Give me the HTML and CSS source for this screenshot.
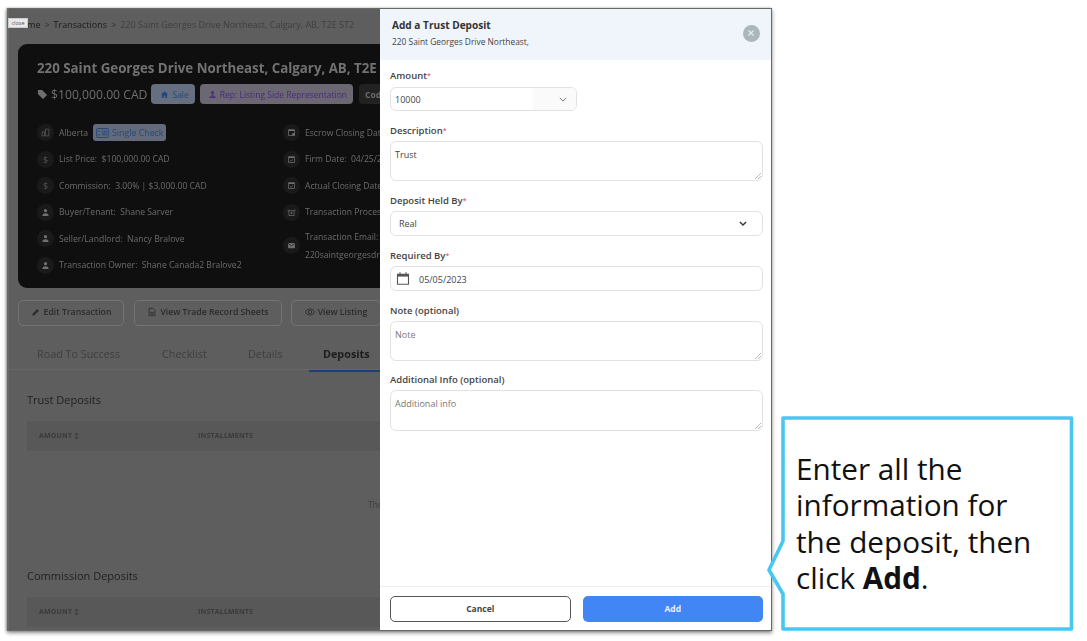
FILE: index.html
```html
<!DOCTYPE html>
<html lang="en">
<head>
<meta charset="utf-8">
<title>Add a Trust Deposit</title>
<link rel="stylesheet" href="styles.css">
</head>
<body>
<div class="window">
  <main class="page">
    <nav class="crumbs"><span class="crumb-strong">Home</span><span class="sep">&gt;</span><span class="crumb-strong">Transactions</span><span class="sep">&gt;</span><span>220 Saint Georges Drive Northeast, Calgary, AB, T2E 5T2</span></nav>
    <section class="card">
      <h1 class="card-title">220 Saint Georges Drive Northeast, Calgary, AB, T2E 5T2</h1>
      <div class="tags">
        <svg class="price-icon" viewBox="0 0 12 12"><path d="M1 1h4.5L11 6.5 6.5 11 1 5.5z" fill="#6f6f6f"/></svg>
        <span class="price">$100,000.00 CAD</span>
        <span class="pill pill-blue"><svg viewBox="0 0 12 12" class="pill-icon"><path d="M6 1.5 1 6h1.5v4.5h2.5v-3h2v3h2.5V6H11z" fill="#24477f"/></svg>Sale</span>
        <span class="pill pill-purple"><svg viewBox="0 0 12 12" class="pill-icon"><circle cx="6" cy="3.2" r="2" fill="#4b2a78"/><path d="M4.8 5.5h2.4v3H10v2H2v-2h2.8z" fill="#4b2a78"/></svg>Rep: Listing Side Representation</span>
        <span class="pill pill-dark">Code</span>
      </div>
      <div class="facts">
        <div class="fact-col">
          <div class="fact"><span class="fact-icon"><svg viewBox="0 0 12 12"><path d="M1.5 10.5V5h3v5.5zM6 10.5v-9h4.5v9z" fill="none" stroke="#5c5c5c"/></svg></span><span>Alberta</span><span class="check"><svg viewBox="0 0 14 11" class="check-icon"><rect x=".6" y=".6" width="12.8" height="9.8" rx="1" fill="none" stroke="#24477f" stroke-width="1.1"/><path d="M6 3.5h6M6 5.5h6M6 7.5h6M2 3.5h2.5M2 7.5h2.5" stroke="#24477f"/></svg>Single Check</span></div>
          <div class="fact"><span class="fact-icon glyph">$</span><span>List Price:&nbsp; $100,000.00 CAD</span></div>
          <div class="fact"><span class="fact-icon glyph">$</span><span>Commission:&nbsp; 3.00% | $3,000.00 CAD</span></div>
          <div class="fact"><span class="fact-icon"><svg viewBox="0 0 12 12"><circle cx="6" cy="3.6" r="2.2" fill="#6f6f6f"/><path d="M1.8 10.5c0-2.6 2-3.6 4.2-3.6s4.2 1 4.2 3.6z" fill="#6f6f6f"/></svg></span><span>Buyer/Tenant:&nbsp; Shane Sarver</span></div>
          <div class="fact"><span class="fact-icon"><svg viewBox="0 0 12 12"><circle cx="6" cy="3.6" r="2.2" fill="#6f6f6f"/><path d="M1.8 10.5c0-2.6 2-3.6 4.2-3.6s4.2 1 4.2 3.6z" fill="#6f6f6f"/></svg></span><span>Seller/Landlord:&nbsp; Nancy Bralove</span></div>
          <div class="fact"><span class="fact-icon"><svg viewBox="0 0 12 12"><circle cx="6" cy="3.6" r="2.2" fill="#6f6f6f"/><path d="M1.8 10.5c0-2.6 2-3.6 4.2-3.6s4.2 1 4.2 3.6z" fill="#6f6f6f"/></svg></span><span>Transaction Owner:&nbsp; Shane Canada2 Bralove2</span></div>
        </div>
        <div class="fact-col">
          <div class="fact"><span class="fact-icon"><svg viewBox="0 0 12 12"><path d="M2 2.5h8v7.5H2z" fill="none" stroke="#6f6f6f"/><path d="M2 2h8v2H2z" fill="#6f6f6f"/><circle cx="8.6" cy="8.6" r="1.8" fill="#6f6f6f"/></svg></span><span>Escrow Closing Date:&nbsp; 05/05/2023</span></div>
          <div class="fact"><span class="fact-icon"><svg viewBox="0 0 12 12"><path d="M2 2.5h8v7.5H2z" fill="none" stroke="#6f6f6f"/><path d="M2 2h8v2H2z" fill="#6f6f6f"/><path d="m4.2 7 1.3 1.2L8 5.8" fill="none" stroke="#6f6f6f"/></svg></span><span>Firm Date:&nbsp; 04/25/2023</span></div>
          <div class="fact"><span class="fact-icon"><svg viewBox="0 0 12 12"><path d="M2 2.5h8v7.5H2z" fill="none" stroke="#6f6f6f"/><path d="M2 2h8v2H2z" fill="#6f6f6f"/><path d="m4.2 7 1.3 1.2L8 5.8" fill="none" stroke="#6f6f6f"/></svg></span><span>Actual Closing Date:&nbsp; 05/05/2023</span></div>
          <div class="fact"><span class="fact-icon"><svg viewBox="0 0 12 12"><path d="M2.5 3.5h7v6.5h-7zM1.5 2v2.5M10.5 2v2.5M6 5v3M4.5 6.5h3" fill="none" stroke="#6f6f6f"/></svg></span><span>Transaction Processing:&nbsp; Real</span></div>
          <div class="fact fact-tall"><span class="fact-icon"><svg viewBox="0 0 12 12"><rect x="1.5" y="2.5" width="9" height="7" rx="1" fill="#6f6f6f"/><path d="m2 3.5 4 3 4-3" fill="none" stroke="#161616"/></svg></span><span class="fact-stack"><span>Transaction Email:</span><span>220saintgeorgesdrive@real.com</span></span></div>
        </div>
      </div>
    </section>
    <div class="actions">
      <span class="action action-edit"><svg viewBox="0 0 12 12" class="action-icon"><path d="M1.5 10.5 2 8l5.5-5.5 2 2L4 10z" fill="#2b2b2b"/></svg>Edit Transaction</span>
      <span class="action action-sheets"><svg viewBox="0 0 12 12" class="action-icon"><path d="M2.5 1.5h4.5l2.5 2.5v6.5h-7zM4 6.5h4M4 8.5h4" fill="none" stroke="#2b2b2b"/></svg>View Trade Record Sheets</span>
      <span class="action action-listing"><svg viewBox="0 0 12 12" class="action-icon"><ellipse cx="6" cy="6" rx="5" ry="3.4" fill="none" stroke="#2b2b2b"/><circle cx="6" cy="6" r="2" fill="none" stroke="#2b2b2b"/></svg>View Listing</span>
    </div>
    <div class="tabs">
      <span class="tab tab-road">Road To Success</span>
      <span class="tab tab-check">Checklist</span>
      <span class="tab tab-details">Details</span>
      <span class="tab tab-active">Deposits</span>
    </div>
    <h2 class="section-title title-trust">Trust Deposits</h2>
    <div class="table-head"><span class="col-amount">AMOUNT <svg viewBox="0 0 6 10" class="sort"><path d="M3 .5 5.5 4h-5zM3 9.5.5 6h5z" fill="#3d3d3d"/></svg></span><span>INSTALLMENTS</span></div>
    <p class="empty">There are no deposits</p>
    <h2 class="section-title">Commission Deposits</h2>
    <div class="table-head"><span class="col-amount">AMOUNT <svg viewBox="0 0 6 10" class="sort"><path d="M3 .5 5.5 4h-5zM3 9.5.5 6h5z" fill="#3d3d3d"/></svg></span><span>INSTALLMENTS</span></div>
  </main>

  <aside class="drawer">
    <header class="drawer-head">
      <div>
        <h2 class="drawer-title">Add a Trust Deposit</h2>
        <p class="drawer-sub">220 Saint Georges Drive Northeast,</p>
      </div>
      <span class="close"><svg viewBox="0 0 10 10"><path d="m2.5 2.5 5 5M7.5 2.5l-5 5" stroke="#e6eaee" stroke-width="1.2" fill="none"/></svg></span>
    </header>
    <form class="form">
      <div class="field field-first">
        <div class="label">Amount<span class="req">*</span></div>
        <div class="control amount"><span class="amount-value">10000</span><span class="addon"><svg viewBox="0 0 10 6" class="chev-thin"><path d="m1 1 4 4 4-4" fill="none" stroke="#666" stroke-width="1.1"/></svg></span></div>
      </div>
      <div class="field">
        <div class="label">Description<span class="req">*</span></div>
        <div class="control area">Trust</div>
      </div>
      <div class="field">
        <div class="label">Deposit Held By<span class="req">*</span></div>
        <div class="control select"><span>Real</span><svg viewBox="0 0 10 6" class="chev-bold"><path d="m1.2 1 3.8 3.8L8.8 1" fill="none" stroke="#333" stroke-width="1.7"/></svg></div>
      </div>
      <div class="field">
        <div class="label">Required By<span class="req">*</span></div>
        <div class="control date"><svg viewBox="0 0 14 14" class="cal"><path d="M1.5 2.7h11v10h-11z" fill="none" stroke="#555" stroke-width="1.1"/><path d="M1.5 2.5h11v2.6h-11z" fill="#555"/><path d="M4 .8v2.5M10 .8v2.5" stroke="#555" stroke-width="1.1"/></svg><span class="date-value">05/05/2023</span></div>
      </div>
      <div class="field">
        <div class="label">Note (optional)</div>
        <div class="control area placeholder">Note</div>
      </div>
      <div class="field field-last">
        <div class="label">Additional Info (optional)</div>
        <div class="control area area-tall placeholder">Additional info</div>
      </div>
    </form>
    <footer class="drawer-foot">
      <span class="btn btn-cancel">Cancel</span>
      <span class="btn btn-add">Add</span>
    </footer>
  </aside>
  <span class="tip">close</span>
</div>

<div class="callout">
  <svg class="callout-shape" viewBox="0 0 310 220"><path d="M18 3H306.500V214H18V179L4 155 18 126Z" fill="#fff" stroke="#48c8f0" stroke-width="3.6" stroke-linejoin="round"/></svg>
  <p class="callout-text">Enter all the information for the deposit, then click <b>Add</b>.</p>
</div>
</body>
</html>
```

FILE: styles.css
```css
* { box-sizing: border-box; }
html, body { margin: 0; padding: 0; }
body { width: 1087px; height: 641px; background: #fff; position: relative; overflow: hidden; font-family: "Open Sans", sans-serif; }
h1, h2, p { margin: 0; }

.window {
  position: absolute; left: 7px; top: 8px; width: 765px; height: 623px;
  display: flex; background: #5e5e5e;
  border: 1px solid #6a6a64; border-left-width: 2px;
  box-shadow: 0 2px 4px rgba(0,0,0,.45), -1px 0 2px rgba(0,0,0,.25);
}

/* dimmed page */
.page { width: 371px; flex: none; overflow: hidden; padding: 0 0 0 9px; color: #2b2b2b; filter: blur(.35px); white-space: nowrap; }
.crumbs { height: 35px; display: flex; align-items: center; gap: 4px; padding: 0 0 5px 0; margin-left: -3px; font-size: 9px; color: #3f3f3f; }
.crumb-strong { color: #1c1c1c; font-weight: 500; }
.sep { color: #2f2f2f; }

.card { width: 440px; height: 244px; background: #0f0f0f; border-radius: 9px; padding: 15px 0 0 19px; color: #6c6c6c; }
.card-title { font-size: 13.3px; line-height: 18px; font-weight: 700; color: #727272; }
.tags { display: flex; align-items: center; margin-top: 7px; height: 20px; }
.price-icon { width: 11px; height: 11px; margin-right: 3px; }
.price { font-size: 12.2px; color: #6f6f6f; margin-right: 4px; }
.pill { height: 20px; display: inline-flex; align-items: center; gap: 3px; padding: 0 6px; border-radius: 4px; font-size: 8.5px; margin-right: 5px; }
.pill-icon { width: 9px; height: 9px; }
.pill-blue { background: #666f80; color: #24477f; padding: 0 6px 0 9px; }
.pill-purple { background: #6b6874; color: #4b2a78; padding: 0 6px 0 8px; margin-right: 6px; }
.pill-dark { background: #222; color: #6c6c6c; font-weight: 700; }

.facts { display: flex; margin-top: 15.5px; font-size: 8.6px; }
.fact-col { display: flex; flex-direction: column; }
.fact-col:first-child { width: 246px; }
.fact { height: 26.5px; display: flex; align-items: center; gap: 5px; }
.fact-tall { height: 34px; margin-top: 3px; }
.fact-stack { display: flex; flex-direction: column; gap: 6px; }
.fact-icon { width: 17px; height: 17px; border-radius: 50%; background: #1a1a1a; display: flex; align-items: center; justify-content: center; flex: none; }
.fact-icon svg { width: 9px; height: 9px; }
.glyph { font-size: 9px; color: #555; }
.check { height: 17px; display: inline-flex; align-items: center; gap: 3px; padding: 0 3px; background: #636b7b; color: #24477f; border-radius: 3px; font-size: 8.8px; }
.check-icon { width: 13px; height: 10px; }

.actions { display: flex; margin-top: 12px; height: 26px; font-size: 8.7px; font-weight: 600; color: #2b2b2b; }
.action { height: 26px; border: 1px solid #747474; border-radius: 5px; display: flex; align-items: center; justify-content: center; gap: 3px; flex: none; padding-bottom: 2px; }
.action-icon { width: 10px; height: 10px; }
.action-edit { width: 106px; margin-right: 10px; }
.action-sheets { width: 148px; margin-right: 9px; }
.action-listing { width: 90px; }

.tabs { display: flex; height: 44px; margin-left: -9px; padding-top: 20px; font-size: 10.8px; color: #3e3e3e; border-bottom: 1px solid #666; }
.tab { line-height: 16px; }
.tab-road { margin-left: 28px; width: 125px; }
.tab-check { width: 86px; }
.tab-details { width: 75px; }
.tab-active { color: #1c1c1c; font-weight: 700; position: relative; }
.tab-active::after { content: ""; position: absolute; left: -14px; right: -14px; top: 23.5px; height: 2.4px; background: #1d3f77; }

.section-title { font-size: 11px; line-height: 14px; font-weight: 500; color: #1f1f1f; margin-left: 9px; }
.title-trust { margin-top: 23px; }
.table-head { margin: 14px 0 0 9px; height: 30px; width: 400px; background: #585858; display: flex; align-items: center; padding: 0 0 1px 12px; font-size: 7px; font-weight: 700; letter-spacing: .2px; color: #3a3a3a; }
.col-amount { width: 159px; display: flex; align-items: center; gap: 2px; }
.sort { width: 5px; height: 8px; }
.empty { height: 118px; padding: 48px 0 0 350px; font-size: 8.5px; line-height: 12px; color: #3c3c3c; }

/* drawer */
.drawer { flex: 1; min-width: 0; background: #fff; display: flex; flex-direction: column; }
.drawer-head { height: 51px; flex: none; background: #f0f5fc; display: flex; justify-content: space-between; align-items: center; padding: 0 11.5px 3px 12px; }
.drawer-title { font-size: 10.1px; line-height: 14px; font-weight: 700; color: #333; }
.drawer-sub { font-size: 8.4px; line-height: 12px; color: #444; margin-top: 4px; }
.close { width: 17px; height: 17px; border-radius: 50%; background: #adb5bd; display: flex; align-items: center; justify-content: center; }
.close svg { width: 10px; height: 10px; }

.form { flex: 1; display: flex; flex-direction: column; gap: 14px; padding: 10px 8px 0 10px; }
.field { display: flex; flex-direction: column; gap: 4px; }
.field-first { gap: 5px; }
.field-last { margin-top: -1px; }
.label { font-size: 9.5px; line-height: 12px; font-weight: 600; color: #444; }
.req { color: #e8607a; font-size: 7px; vertical-align: 1px; }
.control { border: 1px solid #e2e2e2; border-radius: 6px; font-size: 9px; color: #444; background: #fff; }
.amount { width: 187px; height: 24px; display: flex; align-items: center; overflow: hidden; }
.amount-value { flex: 1; padding-left: 4px; }
.addon { width: 43px; height: 100%; background: #fafafa; display: flex; align-items: center; justify-content: flex-end; padding-right: 9px; }
.chev-thin { width: 8px; height: 5px; }
.chev-bold { width: 8px; height: 5px; }
.area {
  height: 40px; padding: 6px 4px 0; line-height: 14px;
  background: linear-gradient(135deg, transparent 45%, #bbb 45% 55%, transparent 55% 72%, #bbb 72% 82%, transparent 82%) no-repeat right 1px bottom 1px / 6px 6px #fff;
}
.area-tall { height: 41px; }
.placeholder { color: #777; }
.select { height: 25px; display: flex; align-items: center; justify-content: space-between; padding: 0 15px 0 8px; }
.date { height: 25px; display: flex; align-items: center; gap: 9px; padding-left: 5px; }
.date-value { padding-top: 1px; }
.cal { width: 14px; height: 15px; }

.drawer-foot { height: 44px; flex: none; border-top: 1px solid #eee; display: flex; gap: 12px; padding: 9px 8px 0 10px; }
.btn { height: 26px; flex: 1 1 10px; border-radius: 5px; display: flex; align-items: center; justify-content: center; padding-bottom: 1px; font-size: 8.5px; font-weight: 700; }
.btn-cancel { border: 1px solid #555; color: #444; background: #fff; }
.btn-add { background: #4285f4; color: #eaf1ff; }

.tip { position: absolute; left: -1px; top: 9px; width: 20px; height: 10px; background: #e9e9e9; border: 1px solid #ccc; font-size: 5.5px; line-height: 8px; text-align: center; color: #555; }

/* callout */
.callout { position: absolute; left: 765px; top: 415px; width: 310px; height: 220px; display: flex; align-items: center; padding: 0 32px 3px 31px; }
.callout-shape { position: absolute; left: 0; top: 0; width: 310px; height: 220px; }
.callout-text { position: relative; font-size: 29.7px; line-height: 36.4px; color: #111; }
.callout-text b { font-weight: 700; }
```
